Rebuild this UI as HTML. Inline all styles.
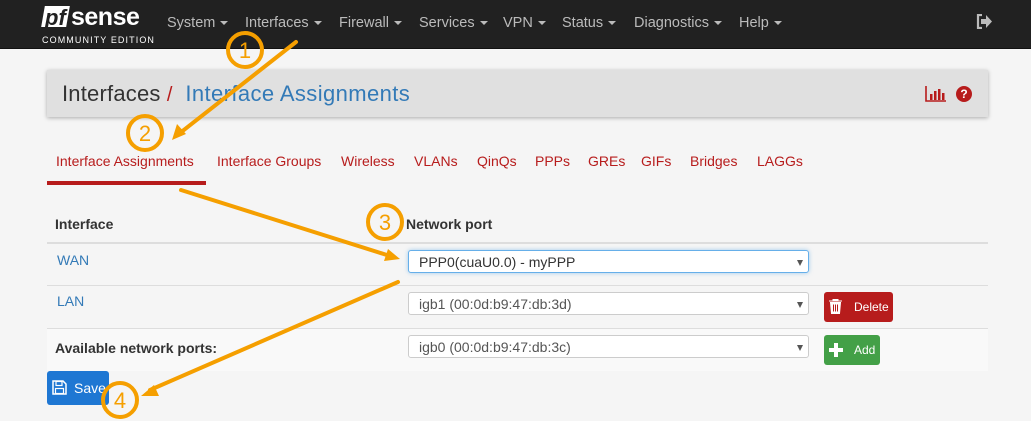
<!DOCTYPE html>
<html><head><meta charset="utf-8"><style>
*{box-sizing:border-box;margin:0;padding:0}
body{width:1031px;height:421px;overflow:hidden;background:#f5f5f5;font-family:"Liberation Sans",sans-serif;position:relative;font-size:14px}
.nav{position:absolute;left:0;top:0;width:1031px;height:49px;background:#212121;border-bottom:1px solid #111}
.nav span{position:absolute;top:15px;color:#bbb;font-size:14.5px}
.car{display:inline-block;border-left:4px solid transparent;border-right:4px solid transparent;border-top:4px solid #bbb;vertical-align:middle;margin-left:5px}
.hdr{position:absolute;left:47px;top:70px;width:941px;height:47px;background:#e0e0e0;box-shadow:0 1px 4px rgba(0,0,0,.3)}
.tab{position:absolute;top:153px;color:#b71c1c;font-size:14px}
.a{position:absolute;color:#337ab7}
.b{position:absolute;font-weight:bold;color:#333;font-size:14px}
.sel{position:absolute;left:408px;width:401px;height:23px;background:#fff;border:1px solid #ccc;border-radius:3px;font-size:14px;color:#555;padding:3px 10px}
.sel:after{content:"";position:absolute;right:5px;top:9px;border-left:3.5px solid transparent;border-right:3.5px solid transparent;border-top:6px solid #555}
.line{position:absolute;left:47px;width:941px;height:1px;background:#ddd}
</style></head><body>
<div class="nav">
 <div style="position:absolute;left:43px;top:6px;width:25px;height:21px;background:#fff;transform:skewX(-10deg)"></div>
 <div style="position:absolute;left:45px;top:5px;font:italic bold 22px 'Liberation Sans';color:#212121">pf</div>
 <div style="position:absolute;left:71px;top:3px;font:bold 25px 'Liberation Sans';color:#fff;letter-spacing:-0.5px">sense</div>
 <div style="position:absolute;left:42px;top:35px;font-size:9px;color:#fff;letter-spacing:1.1px">COMMUNITY EDITION</div>
 <span style="left:167px">System<i class="car"></i></span>
 <span style="left:245px">Interfaces<i class="car"></i></span>
 <span style="left:339px">Firewall<i class="car"></i></span>
 <span style="left:419px">Services<i class="car"></i></span>
 <span style="left:503px">VPN<i class="car"></i></span>
 <span style="left:562px">Status<i class="car"></i></span>
 <span style="left:634px">Diagnostics<i class="car"></i></span>
 <span style="left:739px">Help<i class="car"></i></span>
 <svg style="position:absolute;left:976px;top:14px" width="17" height="15" viewBox="0 0 17 15"><path d="M6 1H2v13h4" stroke="#bbb" stroke-width="2.2" fill="none"/><path d="M5 5h5V1l6 6.5-6 6.5V10H5z" fill="#bbb"/></svg>
</div>
<div class="hdr">
 <div style="position:absolute;left:15px;top:11px;font-size:22px;color:#333;letter-spacing:0.2px">Interfaces <span style="color:#b71c1c;font-size:20px">/</span>&nbsp; <span style="color:#337ab7;letter-spacing:0.4px">Interface Assignments</span></div>
 <svg style="position:absolute;left:878px;top:16px" width="21" height="16"><path d="M1 0v15h20" stroke="#b71c1c" stroke-width="1.6" fill="none"/><rect x="5" y="8" width="2.5" height="6" fill="#b71c1c"/><rect x="9" y="5" width="2.5" height="9" fill="#b71c1c"/><rect x="13" y="3" width="2.5" height="11" fill="#b71c1c"/><rect x="17" y="7" width="2.5" height="7" fill="#b71c1c"/></svg>
 <div style="position:absolute;left:909px;top:16px;width:16px;height:16px;border-radius:50%;background:#b71c1c;color:#fff;font:bold 12px 'Liberation Sans';text-align:center;line-height:16px">?</div>
</div>
<span class="tab" style="left:56px">Interface Assignments</span>
<span class="tab" style="left:217px">Interface Groups</span>
<span class="tab" style="left:341px">Wireless</span>
<span class="tab" style="left:414px">VLANs</span>
<span class="tab" style="left:477px">QinQs</span>
<span class="tab" style="left:535px">PPPs</span>
<span class="tab" style="left:588px">GREs</span>
<span class="tab" style="left:641px">GIFs</span>
<span class="tab" style="left:690px">Bridges</span>
<span class="tab" style="left:757px">LAGGs</span>
<div style="position:absolute;left:47px;top:181px;width:159px;height:4px;background:#b71c1c"></div>
<span class="b" style="left:55px;top:216px">Interface</span>
<span class="b" style="left:406px;top:216px">Network port</span>
<div class="line" style="top:242px;height:2px"></div>
<span class="a" style="left:57px;top:252px">WAN</span>
<div class="sel" style="top:250px;border-color:#66afe9;box-shadow:0 0 4px rgba(102,175,233,.6);color:#333">PPP0(cuaU0.0) - myPPP</div>
<div class="line" style="top:285px"></div>
<span class="a" style="left:57px;top:293px">LAN</span>
<div class="sel" style="top:292px">igb1 (00:0d:b9:47:db:3d)</div>
<div style="position:absolute;left:824px;top:292px;width:69px;height:30px;background:#b71c1c;border-radius:3px;color:#fff;font-size:12px;padding:8px 0 0 30px">Delete
 <svg style="position:absolute;left:5px;top:7px" width="13" height="15"><path d="M0 2h13M4 2V0h5v2M1.5 3.5h10l-1 11h-8z" fill="#fff" stroke="#fff" stroke-width="1"/><path d="M4.5 5.5v7M6.5 5.5v7M8.5 5.5v7" stroke="#b71c1c" stroke-width="1"/></svg></div>
<div class="line" style="top:328px"></div>
<div style="position:absolute;left:47px;top:329px;width:941px;height:42px;background:#f9f9f9"></div>
<span class="b" style="left:55px;top:340px">Available network ports:</span>
<div class="sel" style="top:335px">igb0 (00:0d:b9:47:db:3c)</div>
<div style="position:absolute;left:824px;top:335px;width:56px;height:30px;background:#43a047;border-radius:3px;color:#fff;font-size:12px;padding:8px 0 0 30px">Add
 <svg style="position:absolute;left:5px;top:8px" width="14" height="14"><path d="M7 0v14M0 7h14" stroke="#fff" stroke-width="4"/></svg></div>
<div style="position:absolute;left:47px;top:371px;width:62px;height:34px;background:#1e77d3;border-radius:3px;color:#fff;font-size:14px;padding:9px 0 0 27px">Save
 <svg style="position:absolute;left:5px;top:9px" width="15" height="15"><path d="M1 1h10l3 3v10H1z" fill="none" stroke="#fff" stroke-width="1.5"/><rect x="4" y="1.5" width="6" height="4" fill="none" stroke="#fff" stroke-width="1.2"/><rect x="3.5" y="8.5" width="8" height="5" fill="none" stroke="#fff" stroke-width="1.2"/></svg></div>
<svg style="position:absolute;left:0;top:0" width="1031" height="421">
 <g stroke="#f59f00" stroke-width="4" fill="none" stroke-linecap="round">
  <line x1="296" y1="42" x2="180" y2="133"/>
  <line x1="181" y1="190" x2="390" y2="256"/>
  <line x1="398" y1="282" x2="150" y2="390"/>
  <circle cx="245" cy="50" r="17"/><circle cx="145" cy="133" r="17"/>
  <circle cx="385" cy="222" r="17"/><circle cx="120" cy="400" r="17"/>
 </g>
 <g fill="#f59f00">
  <path d="M172 140l5-16 9 10z"/><path d="M400 259l-16 2 4-12z"/><path d="M141 396l13 -11 5 11z"/>
 </g>
 <g fill="#f59f00" font-family="Liberation Sans" font-size="22" text-anchor="middle">
  <text x="245" y="58">1</text><text x="145" y="141">2</text><text x="385" y="230">3</text><text x="120" y="408">4</text>
 </g>
</svg>
</body></html>
